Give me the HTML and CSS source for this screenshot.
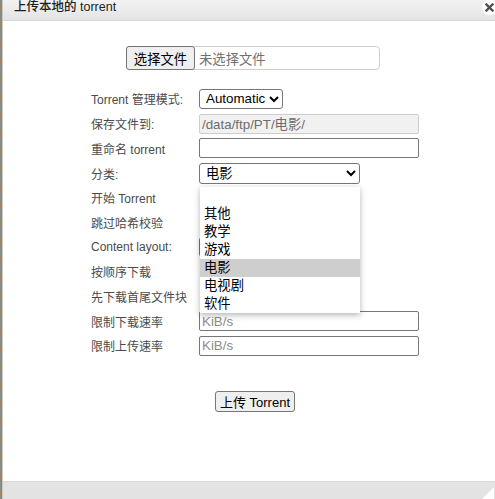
FILE: index.html
```html
<!DOCTYPE html>
<html>
<head>
<meta charset="utf-8">
<link rel="stylesheet" href="styles.css">
</head>
<body>
<div class="desk"></div>
<div class="dialog">
  <div class="titlebar">
    <span class="title">上传本地的 torrent</span>
    <span class="close"><svg width="9" height="9" viewBox="0 0 9 9"><path d="M1.5 1.5 L7.5 7.5 M7.5 1.5 L1.5 7.5" stroke="#505050" stroke-width="2.4" stroke-linecap="square"/></svg></span>
  </div>
  <div class="content">
    <div class="file">
      <span class="file-btn">选择文件</span>
      <span class="file-name">未选择文件</span>
    </div>
    <div class="form">
      <label class="lbl">Torrent 管理模式:</label>
      <div><select class="sel"><option>Automatic</option></select></div>
      <label class="lbl">保存文件到:</label>
      <div><input class="txt" type="text" value="/data/ftp/PT/电影/" disabled></div>
      <label class="lbl">重命名 torrent</label>
      <div><input class="txt" type="text"></div>
      <label class="lbl">分类:</label>
      <div><select class="sel cat"><option>电影</option></select></div>
      <label class="lbl">开始 Torrent</label>
      <div><input type="checkbox" checked class="chk"></div>
      <label class="lbl">跳过哈希校验</label>
      <div><input type="checkbox" class="chk"></div>
      <label class="lbl">Content layout:</label>
      <div><select class="sel"><option>Original</option></select></div>
      <label class="lbl">按顺序下载</label>
      <div><input type="checkbox" class="chk"></div>
      <label class="lbl">先下载首尾文件块</label>
      <div><input type="checkbox" class="chk"></div>
      <label class="lbl">限制下载速率</label>
      <div><input class="txt" type="text" placeholder="KiB/s"></div>
      <label class="lbl">限制上传速率</label>
      <div><input class="txt" type="text" placeholder="KiB/s"></div>
    </div>
    <div class="submit-row"><button class="upload">上传 Torrent</button></div>
  </div>
  <div class="footer"><span class="grip"></span></div>
</div>
<div class="dropdown">
  <div class="opt"></div>
  <div class="opt">其他</div>
  <div class="opt">教学</div>
  <div class="opt">游戏</div>
  <div class="opt on">电影</div>
  <div class="opt">电视剧</div>
  <div class="opt">软件</div>
</div>
</body>
</html>
```
FILE: styles.css
```css
html, body {
  margin: 0;
  padding: 0;
}
body {
  width: 495px;
  height: 499px;
  overflow: hidden;
  display: flex;
  position: relative;
  background: #fff;
  font-family: "Liberation Sans", Arial, "Noto Sans CJK SC", sans-serif;
}
.desk {
  flex: 0 0 2px;
  height: 499px;
  background: repeating-linear-gradient(to bottom, #8a8a80 0, #8a8a80 5px, #a48452 5px, #a48452 9px, #8a8a80 9px, #8a8a80 18px);
}
.dialog {
  flex: 0 0 506px;
  height: 499px;
  border-left: 1px solid #c9c9c9;
  display: flex;
  flex-direction: column;
  position: relative;
  background: #fff;
}
.titlebar {
  height: 20px;
  border-bottom: 1px solid #d6d6d6;
  background: linear-gradient(to bottom, #f2f2f2, #e4e4e4);
  position: relative;
}
.title {
  display: block;
  padding-left: 11px;
  font-size: 12.5px;
  line-height: 14px;
  color: #1e1e1e;
  font-weight: 500;
}
.close {
  position: absolute;
  left: 479px;
  top: 0;
  width: 15px;
  height: 15px;
  border-radius: 50%;
  background: #fff;
  display: flex;
  align-items: center;
  justify-content: center;
}
.content {
  flex: 1;
}
.file {
  margin: 25px 0 0 123px;
  width: 254px;
  height: 24px;
  box-sizing: border-box;
  border: 1px solid #cfcfcf;
  border-radius: 4px;
  display: flex;
  align-items: stretch;
}
.file-btn {
  margin: -1px 0 -1px -1px;
  width: 69px;
  box-sizing: border-box;
  border: 1px solid #767676;
  border-radius: 3px;
  background: #efefef;
  font-size: 13.333px;
  color: #000;
  display: flex;
  align-items: center;
  justify-content: center;
}
.file-name {
  padding-left: 4px;
  font-size: 13.333px;
  color: #707070;
  display: flex;
  align-items: center;
}
.form {
  margin: 16.65px 0 0 88px;
  display: grid;
  grid-template-columns: 109px 260px;
  grid-auto-rows: 24.7px;
  align-items: center;
}
.form > div {
  display: flex;
  align-items: center;
  margin-left: -1px;
}
.lbl {
  font-size: 12px;
  color: #4a4a4a;
  font-family: "Liberation Sans", Arial, "Noto Sans CJK SC", sans-serif;
}
.sel {
  font-family: "Liberation Sans", Arial, "Noto Sans CJK SC", sans-serif;
  font-size: 13.333px;
  height: 20px;
  border: 1px solid #767676;
  border-radius: 3px;
  background: #fff;
  color: #000;
  padding: 0 0 0 2px;
  margin: 0;
}
.cat {
  width: 161px;
  height: 21px;
}
.txt {
  font-family: "Liberation Sans", Arial, "Noto Sans CJK SC", sans-serif;
  font-size: 13.333px;
  width: 220px;
  height: 20px;
  box-sizing: border-box;
  border: 1px solid #767676;
  border-radius: 2px;
  padding: 0 2px;
  margin: 0;
  color: #000;
}
.txt::placeholder {
  color: #8c8c8c;
}
.txt:disabled {
  background: #f1f1f1;
  border-color: #cdcdcd;
  color: #6d6d6d;
}
.chk {
  margin: 0 0 0 4px;
}
.submit-row {
  margin: 33px 0 0 212px;
}
.upload {
  font-family: "Liberation Sans", Arial, "Noto Sans CJK SC", sans-serif;
  font-size: 13px;
  width: 80px;
  height: 21px;
  padding: 0;
  border: 1px solid #767676;
  border-radius: 3px;
  background: #efefef;
  color: #000;
}
.footer {
  height: 18px;
  box-sizing: border-box;
  border-top: 1px solid #d8d8d8;
  background: #e3e3e3;
  position: relative;
}
.grip {
  position: absolute;
  left: 479px;
  bottom: 0;
  width: 0;
  height: 0;
  border-left: 12px solid transparent;
  border-bottom: 12px solid #fff;
}
.dropdown {
  position: absolute;
  left: 200px;
  top: 187px;
  width: 160px;
  background: #fff;
  box-shadow: 0 2px 6px rgba(0, 0, 0, 0.3);
  font-family: "Liberation Sans", Arial, "Noto Sans CJK SC", sans-serif;
  font-size: 13.333px;
  color: #000;
}
.opt {
  height: 18px;
  line-height: 18px;
  padding-left: 4px;
}
.opt.on {
  background: #cecece;
}
```
